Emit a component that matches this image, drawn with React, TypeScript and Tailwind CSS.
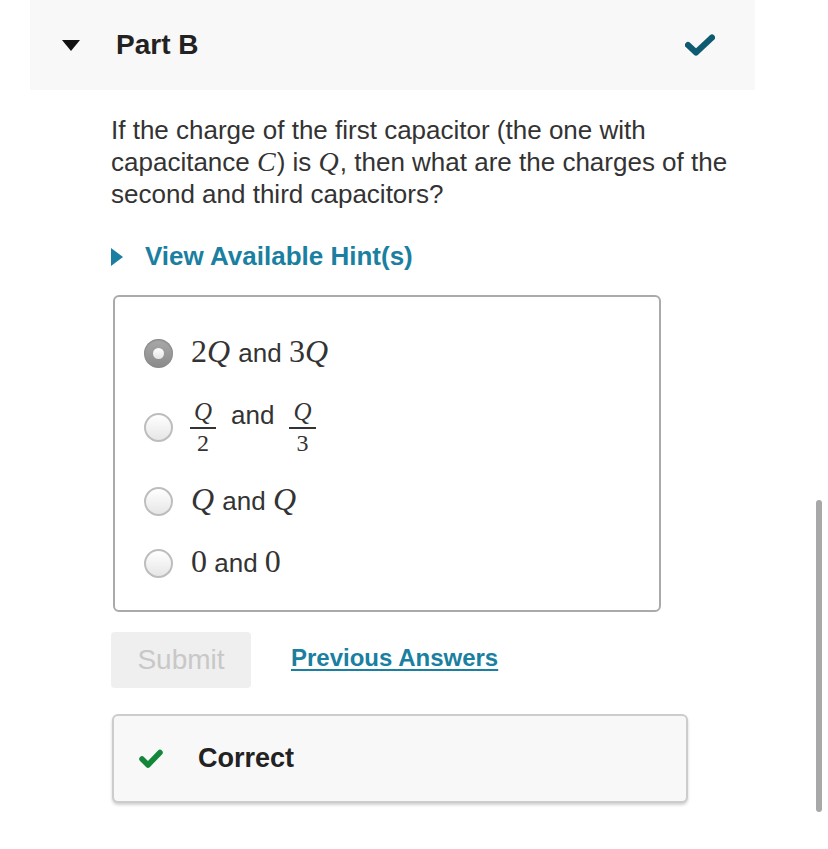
import { ReactNode } from 'react';

const sans = { fontFamily: '"Liberation Sans", Arial, sans-serif' };
const serif = { fontFamily: '"Liberation Serif", "Times New Roman", serif' };

function M({ children, size = 'text-[28px]' }: { children: ReactNode; size?: string }) {
  return (
    <span className={`italic leading-none pr-[1px] ${size}`} style={serif}>
      {children}
    </span>
  );
}

function N({ children }: { children: ReactNode }) {
  return (
    <span className="text-[32px] leading-none" style={serif}>
      {children}
    </span>
  );
}

function Frac({ num, den }: { num: string; den: string }) {
  return (
    <span className="inline-flex flex-col items-center leading-none" style={serif}>
      <span className="italic text-[25px] px-[4px] pb-[3px] border-b-2 border-[#333]">{num}</span>
      <span className="text-[24px] pt-[2px]">{den}</span>
    </span>
  );
}

function Radio({ checked }: { checked?: boolean }) {
  if (checked) {
    return (
      <span className="w-[29px] h-[29px] rounded-full shrink-0 flex items-center justify-center bg-gradient-to-b from-[#a9a9a9] to-[#8a8a8a] shadow-[inset_0_1px_2px_rgba(0,0,0,0.25)]">
        <span className="w-[11px] h-[11px] rounded-full bg-gradient-to-b from-white to-[#e4e4e4]" />
      </span>
    );
  }
  return (
    <span className="w-[29px] h-[29px] rounded-full shrink-0 border-2 border-[#bdbdbd] bg-gradient-to-b from-white to-[#e6e6e6]" />
  );
}

export default function App() {
  return (
    <div className="relative w-[828px] h-[849px] bg-white text-[#333]" style={sans}>
      {/* Part header */}
      <div className="ml-[30px] w-[725px] h-[90px] bg-[#f8f8f8] flex items-center">
        <svg width="18" height="12" viewBox="0 0 18 12" className="ml-[32px] mt-[2px]">
          <path d="M0 0 L18 0 L9 11 Z" fill="#111" />
        </svg>
        <span className="ml-[36px] text-[28px] font-bold text-[#222]">Part B</span>
        <svg width="30" height="22" viewBox="0 0 30 22" className="ml-auto mr-[40px]">
          <path d="M3 11 L11 18.5 L27 3.5" stroke="#0e5a70" strokeWidth="6" fill="none" strokeLinecap="round" strokeLinejoin="round" />
        </svg>
      </div>

      <div className="pl-[111px]">
        {/* Question */}
        <p className="mt-[24px] w-[650px] text-[26px] leading-[32px] text-[#333]">
          If the charge of the first capacitor (the one with capacitance <M>C</M>) is <M>Q</M>, then what are the
          charges of the second and third capacitors?
        </p>

        {/* Hint */}
        <div className="mt-[27px] flex items-center">
          <svg width="12" height="18" viewBox="0 0 12 18">
            <path d="M0 0 L12 9 L0 18 Z" fill="#1a7fa0" />
          </svg>
          <span className="ml-[22px] text-[26px] font-bold text-[#1a7fa0]">View Available Hint(s)</span>
        </div>

        {/* Choices */}
        <div className="mt-[19px] ml-[2px] w-[548px] h-[317px] border-2 border-[#aaa] rounded-[6px] pl-[29px] pt-[41px]">
          <div className="flex items-center h-[30px] gap-[18px]">
            <Radio checked />
            <span className="text-[26px]">
              <N>2</N><M size="text-[32px]">Q</M> and <N>3</N><M size="text-[32px]">Q</M>
            </span>
          </div>
          <div className="flex items-center h-[62px] mt-[28px] gap-[17px]">
            <Radio />
            <span className="flex items-center text-[26px]">
              <Frac num="Q" den="2" />
              <span className="mx-[15px] -mt-[24px]">and</span>
              <Frac num="Q" den="3" />
            </span>
          </div>
          <div className="flex items-center h-[30px] mt-[28px] gap-[18px]">
            <Radio />
            <span className="text-[26px]">
              <M size="text-[32px]">Q</M> and <M size="text-[32px]">Q</M>
            </span>
          </div>
          <div className="flex items-center h-[30px] mt-[32px] gap-[18px]">
            <Radio />
            <span className="text-[26px]">
              <N>0</N> and <N>0</N>
            </span>
          </div>
        </div>

        {/* Submit row */}
        <div className="mt-[20px] flex items-center">
          <button className="w-[140px] h-[56px] rounded-[4px] bg-[#efefef] text-[28px] text-[#c8c8c8]">Submit</button>
          <a className="ml-[40px] -mt-[4px] text-[24px] font-bold text-[#1a7fa0] underline underline-offset-[3px]">Previous Answers</a>
        </div>

        {/* Feedback */}
        <div className="mt-[26px] ml-[1px] w-[576px] h-[89px] rounded-[6px] border-2 border-[#ccc] bg-[#f8f8f8] shadow-[0_2px_3px_rgba(0,0,0,0.18)] flex items-center">
          <svg width="24" height="20" viewBox="0 0 24 20" className="ml-[25px]">
            <path d="M3 10 L9 16 L21 3.5" stroke="#12873a" strokeWidth="5.5" fill="none" strokeLinecap="round" strokeLinejoin="round" />
          </svg>
          <span className="ml-[35px] text-[27px] font-bold text-[#222]">Correct</span>
        </div>
      </div>

      {/* overlay scrollbar */}
      <div className="absolute left-[816px] top-[500px] w-[6px] h-[312px] rounded-full bg-[#a8a8a8]" />
    </div>
  );
}
